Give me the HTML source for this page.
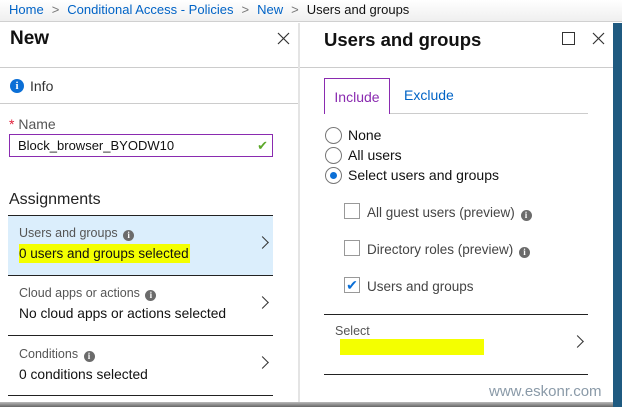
<!DOCTYPE html>
<html><head><style>
*{margin:0;padding:0;box-sizing:border-box}
body{width:622px;height:407px;overflow:hidden;background:#fff;font-family:"Liberation Sans",sans-serif;position:relative;color:#111}
.a{position:absolute;white-space:nowrap}
.bc{left:0;top:0;width:622px;height:22px;background:linear-gradient(#fff,#efefef);border-bottom:1px solid #d0d0d0;font-size:13px;line-height:20px;padding-left:9px}
.bc b{font-weight:normal;color:#0063c6}
.bc i{font-style:normal;color:#777;margin:0 8px}
.hl{position:absolute;height:1px;background:#ccc}
.dl{position:absolute;height:1px;background:#222}
.info{display:inline-block;width:11px;height:11px;border-radius:50%;background:#6b6b6b;color:#fff;font-size:9px;line-height:11px;text-align:center;font-weight:bold;font-family:"Liberation Serif",serif;vertical-align:-1px;margin-left:2px}
.chev{position:absolute;width:9px;height:9px;border-right:1.3px solid #333;border-top:1.3px solid #333;transform:rotate(45deg)}
.rad{position:absolute;width:17px;height:17px;border:1px solid #777;border-radius:50%;background:#fff}
.cb{position:absolute;width:16px;height:16px;border:1px solid #999;background:#fff}
</style></head><body>
<div class="a bc"><b>Home</b><i>&gt;</i><b>Conditional Access - Policies</b><i>&gt;</i><b>New</b><i>&gt;</i>Users and groups</div>
<div class="a" style="left:298px;top:23px;width:2px;height:380px;background:#e4e4e4"></div>
<div class="a" style="left:613px;top:23px;width:9px;height:384px;background:#1f5a80"></div>
<div class="a" style="left:0;top:402px;width:613px;height:5px;background:linear-gradient(#bbb,#666)"></div>
<div class="a" style="left:10px;top:28px;font-size:19px;font-weight:bold">New</div>
<svg class="a" style="left:277px;top:32px" width="13" height="13"><path d="M1 1L12 12M12 1L1 12" stroke="#333" stroke-width="1.2"/></svg>
<div class="hl" style="left:0;top:67px;width:298px"></div>
<div class="a" style="left:10px;top:79px;width:14px;height:14px;border-radius:50%;background:#0b6fd6;color:#fff;font-size:11px;line-height:14px;text-align:center;font-weight:bold;font-family:'Liberation Serif',serif">i</div>
<div class="a" style="left:30px;top:78px;font-size:14px;color:#333">Info</div>
<div class="hl" style="left:0;top:103px;width:298px"></div>
<div class="a" style="left:9px;top:116px;font-size:14px;color:#555"><span style="color:#e0203a">*</span> Name</div>
<div class="a" style="left:9px;top:134px;width:264px;height:23px;border:1px solid #8a2bb0;font-size:13px;line-height:21px;padding-left:8px">Block_browser_BYODW10<span style="position:absolute;right:4px;color:#5ca82a">✔</span></div>
<div class="a" style="left:9px;top:191px;font-size:16px;color:#222">Assignments</div>
<div class="a" style="left:8px;top:216px;width:265px;height:59px;background:#dbeefc"></div>
<div class="dl" style="left:8px;top:215px;width:265px"></div>
<div class="dl" style="left:8px;top:275px;width:265px"></div>
<div class="dl" style="left:8px;top:335px;width:265px"></div>
<div class="dl" style="left:8px;top:395px;width:265px"></div>
<div class="a" style="left:19px;top:226px;font-size:12.5px;color:#555">Users and groups <span class="info">i</span></div>
<div class="a" style="left:19px;top:244px;width:171px;height:19px;background:#f4ff00"></div>
<div class="a" style="left:19px;top:246px;font-size:13.5px">0 users and groups selected</div>
<div class="a" style="left:19px;top:286px;font-size:12.5px;color:#555">Cloud apps or actions <span class="info">i</span></div>
<div class="a" style="left:19px;top:306px;font-size:13.8px">No cloud apps or actions selected</div>
<div class="a" style="left:19px;top:347px;font-size:12.5px;color:#555">Conditions <span class="info">i</span></div>
<div class="a" style="left:19px;top:367px;font-size:13.8px">0 conditions selected</div>
<div class="chev" style="left:258px;top:238px"></div>
<div class="chev" style="left:258px;top:298px"></div>
<div class="chev" style="left:258px;top:358px"></div>
<div class="a" style="left:324px;top:29px;font-size:18.5px;font-weight:bold">Users and groups</div>
<div class="a" style="left:562px;top:32px;width:13px;height:13px;border:1.3px solid #333"></div>
<svg class="a" style="left:592px;top:32px" width="13" height="13"><path d="M1 1L12 12M12 1L1 12" stroke="#333" stroke-width="1.2"/></svg>
<div class="hl" style="left:300px;top:67px;width:313px"></div>
<div class="hl" style="left:324px;top:113px;width:264px"></div>
<div class="a" style="left:324px;top:78px;width:66px;height:36px;border:1px solid #8a2bb0;border-bottom:none;background:#fff;font-size:14px;color:#8a2bb0;text-align:center;line-height:36px">Include</div>
<div class="a" style="left:404px;top:87px;font-size:14px;color:#0063c6">Exclude</div>
<div class="rad" style="left:325px;top:127px"></div>
<div class="rad" style="left:325px;top:147px"></div>
<div class="rad" style="left:325px;top:167px"></div>
<div class="a" style="left:330px;top:172px;width:7px;height:7px;border-radius:50%;background:#0b6fd6"></div>
<div class="a" style="left:348px;top:127px;font-size:14px">None</div>
<div class="a" style="left:348px;top:147px;font-size:14px">All users</div>
<div class="a" style="left:348px;top:167px;font-size:14px">Select users and groups</div>
<div class="cb" style="left:344px;top:203px"></div>
<div class="cb" style="left:344px;top:240px"></div>
<div class="cb" style="left:344px;top:277px;color:#0b6fd6;font-size:14px;line-height:14px;text-align:center">✔</div>
<div class="a" style="left:367px;top:205px;font-size:13.5px;color:#444">All guest users (preview) <span class="info">i</span></div>
<div class="a" style="left:367px;top:242px;font-size:13.5px;color:#444">Directory roles (preview) <span class="info">i</span></div>
<div class="a" style="left:367px;top:279px;font-size:13.5px;color:#444">Users and groups</div>
<div class="dl" style="left:324px;top:314px;width:264px"></div>
<div class="a" style="left:335px;top:324px;font-size:12.5px;color:#555">Select</div>
<div class="a" style="left:340px;top:339px;width:144px;height:16px;background:#f4ff00"></div>
<div class="chev" style="left:573px;top:337px"></div>
<div class="dl" style="left:324px;top:374px;width:264px"></div>
<div class="a" style="left:489px;top:383px;font-size:15px;color:#8a9aa8">www.eskonr.com</div>
</body></html>
